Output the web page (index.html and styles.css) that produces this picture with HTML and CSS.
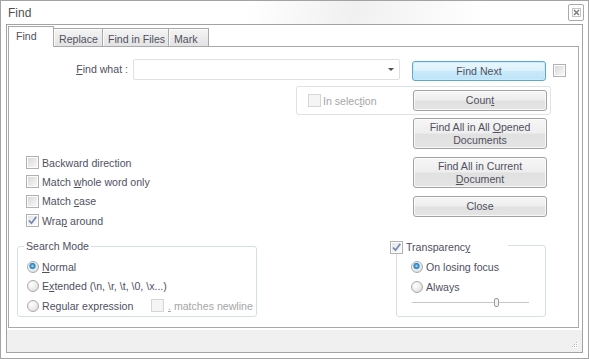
FILE: index.html
```html
<!DOCTYPE html>
<html lang="en">
<head>
  <meta charset="UTF-8" />
  <title>Find</title>
  <link rel="stylesheet" href="styles.css">
</head>
<body>
  <div class="window">

    <!-- title bar -->
    <div class="titlebar">
      <span class="title">Find</span>
      <span class="close-btn">
        <svg width="9" height="9" viewBox="0 0 9 9"><rect x="0.5" y="0.5" width="8" height="8" fill="none" stroke="#c4c4c4"/><path d="M2 2 L7 7 M7 2 L2 7" stroke="#7d7d7d" stroke-width="1.5"/></svg>
      </span>
    </div>

    <div class="frame">
      <div class="tabs">
        <div class="tab active tab-find">Find</div>
        <div class="tab tab-replace">Replace</div>
        <div class="tab tab-files">Find in Files</div>
        <div class="tab tab-mark">Mark</div>
      </div>

      <div class="panel">

        <!-- Find what row -->
        <div class="find-row">
          <label class="find-label"><u>F</u>ind what :</label>
          <div class="combo"><span class="arrow"></span></div>
          <button class="btn default find-next">Find Next</button>
          <span class="check side-check"></span>
        </div>

        <div class="selection-group">
          <span class="check disabled"></span>
          <span class="dim">In selec<u>t</u>ion</span>
          <button class="btn short count">Coun<u>t</u></button>
        </div>

        <div class="middle">
          <div class="options">
            <div class="option"><span class="check"></span><span>Backward direction</span></div>
            <div class="option"><span class="check"></span><span>Match <u>w</u>hole word only</span></div>
            <div class="option"><span class="check"></span><span>Match <u>c</u>ase</span></div>
            <div class="option"><span class="check on"><svg width="9" height="9" viewBox="0 0 9 9"><path d="M1 4.5 L3.5 7.2 L8.3 0.8" fill="none" stroke="#7486b2" stroke-width="1.7"/></svg></span><span>Wra<u>p</u> around</span></div>
          </div>
          <div class="actions">
            <button class="btn tall">Find All in All <u>O</u>pened<br>Documents</button>
            <button class="btn tall">Find All in Current<br><u>D</u>ocument</button>
            <button class="btn short">Close</button>
          </div>
        </div>

        <div class="bottom">
          <fieldset class="group search-mode">
            <legend>Search Mode</legend>
            <div class="radio-list">
              <div class="option"><span class="radio on"></span><span><u>N</u>ormal</span></div>
              <div class="option"><span class="radio"></span><span>E<u>x</u>tended (\n, \r, \t, \0, \x...)</span></div>
              <div class="option">
                <span class="regex"><span class="radio"></span><span>Re<u>g</u>ular expression</span></span>
                <span class="check disabled"></span>
                <span class="dim newline"><u>.</u> matches newline</span>
              </div>
            </div>
          </fieldset>

          <fieldset class="group transparency">
            <legend><span class="check on"><svg width="9" height="9" viewBox="0 0 9 9"><path d="M1 4.5 L3.5 7.2 L8.3 0.8" fill="none" stroke="#7486b2" stroke-width="1.7"/></svg></span><span>Transparenc<u>y</u></span></legend>
            <div class="radio-list wide">
              <div class="option"><span class="radio on"></span><span>On losing focus</span></div>
              <div class="option"><span class="radio"></span><span>Always</span></div>
            </div>
            <div class="slider"><span class="thumb"></span></div>
          </fieldset>
        </div>

      </div>

      <div class="statusbar">
        <svg width="7" height="7" viewBox="0 0 7 7">
          <rect x="4" y="0" width="2" height="2" fill="#fff"/><rect x="4" y="0" width="1" height="1" fill="#b5b5b5"/>
          <rect x="2" y="2" width="2" height="2" fill="#fff"/><rect x="2" y="2" width="1" height="1" fill="#b5b5b5"/>
          <rect x="4" y="2" width="2" height="2" fill="#fff"/><rect x="4" y="2" width="1" height="1" fill="#b5b5b5"/>
          <rect x="0" y="4" width="2" height="2" fill="#fff"/><rect x="0" y="4" width="1" height="1" fill="#b5b5b5"/>
          <rect x="2" y="4" width="2" height="2" fill="#fff"/><rect x="2" y="4" width="1" height="1" fill="#b5b5b5"/>
          <rect x="4" y="4" width="2" height="2" fill="#fff"/><rect x="4" y="4" width="1" height="1" fill="#b5b5b5"/>
        </svg>
      </div>
    </div>

  </div>
</body>
</html>
```

FILE: styles.css
```css
* {
  box-sizing: border-box;
}

body {
  margin: 0;
  background: #fff;
  font-family: "Liberation Sans", Arial, sans-serif;
  font-size: 10.6px;
  color: #50505f;
}

.window {
  width: 589px;
  height: 359px;
  border: 1px solid #a3a3a3;
  display: flex;
  flex-direction: column;
  background: #fff;
}

.titlebar {
  height: 23px;
  flex: none;
  display: flex;
  align-items: center;
  padding: 0 4px 0 7px;
  background: linear-gradient(100deg, #fff 42%, #f0f0f0 60%, #fff 82%);
}

.title {
  flex: 1;
  font-size: 12px;
  color: #505050;
}

.close-btn {
  width: 16px;
  height: 17px;
  border: 1px solid #a9a9a9;
  border-radius: 2px;
  background: #fff;
  display: flex;
  align-items: center;
  justify-content: center;
}

.frame {
  flex: 1;
  margin: 0 5px 5px 5px;
  border: 1px solid #a3a3a3;
  display: flex;
  flex-direction: column;
}

/* tabs */
.tabs {
  height: 21px;
  flex: none;
  display: flex;
  align-items: flex-end;
  padding-left: 1px;
}

.tab {
  height: 18px;
  margin-left: -1px;
  padding: 4px 0 0 5px;
  line-height: 13px;
  border: 1px solid #a9a9a9;
  border-bottom: none;
  background: linear-gradient(#f4f4f4, #e3e3e3);
  box-shadow: inset 1px 1px 0 #fcfcfc;
}

.tab.active {
  height: 21px;
  margin-left: 0;
  margin-bottom: -1px;
  padding: 3px 0 0 7px;
  background: #fff;
  position: relative;
  z-index: 1;
}

.tab-find { width: 46px; }
.tab-replace { width: 50px; }
.tab-files { width: 67px; }
.tab-mark { width: 41px; }

.panel {
  height: 282px;
  flex: none;
  margin: 0 3px 0 1px;
  border: 1px solid #a9a9a9;
  padding-top: 12px;
}

.statusbar {
  flex: 1;
  margin-top: 2px;
  background: #f0f0f0;
  display: flex;
  justify-content: flex-end;
  align-items: flex-end;
  padding: 0 3px 3px 0;
}

/* controls */
.btn {
  width: 134px;
  padding: 0;
  font: inherit;
  color: inherit;
  line-height: 13px;
  border: 1px solid #a2a2a2;
  border-radius: 3px;
  background: linear-gradient(#f6f6f6, #eeeeee 48%, #e1e1e1 52%, #e4e4e4);
  box-shadow: inset 0 0 0 1px rgba(255, 255, 255, 0.75);
}

.btn.default {
  border-color: #5ca8d3;
  background: linear-gradient(#eaf7fd, #dcf2fc 48%, #c8e9fa 52%, #bfe4f8);
  box-shadow: inset 0 0 0 1px #c9ecfc;
}

.btn.tall { height: 31px; }
.btn.short { height: 21px; }

.check {
  width: 13px;
  height: 13px;
  flex: none;
  border: 1px solid #b1b1b1;
  padding: 1px;
  background: linear-gradient(135deg, #d9d9d9, #f8f8f8) content-box, #fcfcfc;
  display: flex;
  align-items: center;
  justify-content: center;
}

.check.disabled {
  border-color: #d6d6d6;
  background: #f5f5f5;
}

.check.on {
  background: linear-gradient(135deg, #e6e6e6, #fbfbfb) content-box, #fcfcfc;
}

.check svg {
  overflow: visible;
}

.radio {
  width: 12px;
  height: 12px;
  flex: none;
  border: 1px solid #ababab;
  border-radius: 50%;
  background: radial-gradient(circle at 35% 35%, #fff 0, #efefef 45%, #d4d4d4 100%);
}

.radio.on {
  background:
    radial-gradient(circle at 45% 40%, #b7e0f6 0, #4a9dd0 1.6px, #2f7fb8 2.6px, #8fc4e4 3.2px, transparent 3.6px),
    radial-gradient(circle at 35% 35%, #fff 0, #efefef 45%, #d4d4d4 100%);
}

.option {
  display: flex;
  align-items: center;
  gap: 3px;
  height: 13px;
  white-space: nowrap;
}

.dim {
  color: #a6a6a6;
}

/* find row */
.find-row {
  display: flex;
  align-items: flex-start;
  height: 22px;
}

.find-label {
  width: 119px;
  margin-right: 5px;
  line-height: 21px;
  text-align: right;
}

.combo {
  width: 267px;
  height: 21px;
  border: 1px solid #e0e0e0;
  border-radius: 2px;
  display: flex;
  align-items: center;
  justify-content: flex-end;
  padding-right: 5px;
}

.arrow {
  border-left: 3px solid transparent;
  border-right: 3px solid transparent;
  border-top: 3px solid #505050;
}

.find-next {
  height: 20px;
  margin: 2px 0 0 12px;
}

.side-check {
  margin: 5px 0 0 7px;
}

.selection-group {
  width: 255px;
  height: 29px;
  margin: 5px 0 0 287px;
  border: 1px solid #dbe2e8;
  border-radius: 3px;
  display: flex;
  align-items: center;
  padding: 0 3px 0 11px;
}

.selection-group .dim {
  margin-left: 2px;
}

.count {
  margin-left: auto;
}

/* middle */
.middle {
  height: 112px;
  display: flex;
  justify-content: space-between;
  padding-right: 31px;
}

.options {
  padding: 41px 0 0 17px;
  display: flex;
  flex-direction: column;
  gap: 6.4px;
}

.actions {
  padding-top: 3px;
  display: flex;
  flex-direction: column;
  gap: 8px;
}

/* group boxes */
.bottom {
  display: flex;
  justify-content: space-between;
  align-items: flex-start;
  padding: 0 32px 0 8px;
}

.group {
  margin: 0;
  min-width: 0;
  border: 1px solid #d5dfe5;
  border-radius: 3px;
}

.group legend {
  padding: 0 2px;
  line-height: 12px;
}

.search-mode {
  width: 240px;
  height: 77px;
  margin-top: 13px;
  padding: 8px 0 0 9px;
}

.search-mode legend {
  margin-left: -3px;
}

.radio-list {
  display: flex;
  flex-direction: column;
  gap: 6.5px;
}

.radio-list.wide {
  gap: 7px;
}

.regex {
  width: 121px;
  display: flex;
  align-items: center;
  gap: 3px;
}

.newline {
  margin-left: 1px;
}

.transparency {
  width: 150px;
  height: 80px;
  margin-top: 10px;
  padding: 6px 0 0 14px;
}

.transparency legend {
  width: 118px;
  margin-left: -21px;
  padding: 4px 0 0 0;
  display: flex;
  align-items: center;
  gap: 3px;
  line-height: 13px;
}

.slider {
  width: 117px;
  height: 9px;
  margin: 5px 0 0 1px;
  padding-left: 82px;
  display: flex;
  background: linear-gradient(#c6c6c6, #c6c6c6) center / 100% 1px no-repeat;
}

.thumb {
  width: 5px;
  height: 9px;
  border: 1px solid #9a9a9a;
  border-radius: 2px;
  background: #f3f3f3;
}
```
